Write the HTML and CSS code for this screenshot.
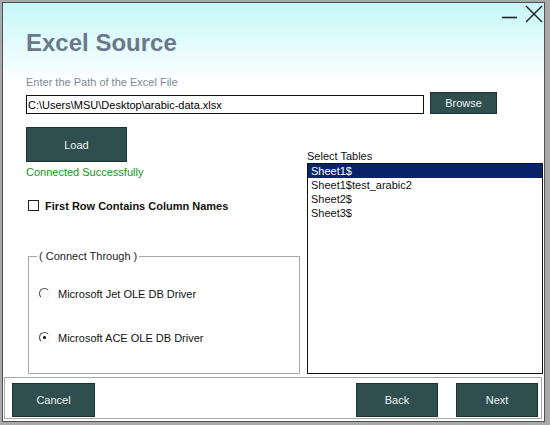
FILE: index.html
```html
<!DOCTYPE html>
<html>
<head>
  <title>Excel Source</title>
  <link rel="stylesheet" href="styles.css">
</head>
<body>

<div class="window">
  <div class="titlebar">
    <svg class="win-btn minimize" width="16" height="18" viewBox="0 0 16 18">
      <line x1="0" y1="12.5" x2="15" y2="12.5" stroke="#222" stroke-width="1.6"/>
    </svg>
    <svg class="win-btn close" width="18" height="18" viewBox="0 0 18 18">
      <line x1="1" y1="1" x2="17" y2="17" stroke="#222" stroke-width="1.4"/>
      <line x1="17" y1="1" x2="1" y2="17" stroke="#222" stroke-width="1.4"/>
    </svg>
  </div>

  <div class="content">
    <h1 class="title">Excel Source</h1>
    <div class="path-label">Enter the Path of the Excel File</div>
    <div class="path-row">
      <input class="path-input" type="text" value="C:\Users\MSU\Desktop\arabic-data.xlsx">
      <button class="btn browse">Browse</button>
    </div>

    <div class="main">
      <div class="left-col">
        <button class="btn load">Load</button>
        <div class="status">Connected Successfully</div>
        <div class="check-row">
          <span class="checkbox"></span>
          <span class="check-text">First Row Contains Column Names</span>
        </div>
        <fieldset class="group">
          <legend>( Connect Through )</legend>
          <div class="radio-row first">
            <span class="radio"></span>
            <span>Microsoft Jet OLE DB Driver</span>
          </div>
          <div class="radio-row second">
            <span class="radio checked"></span>
            <span>Microsoft ACE OLE DB Driver</span>
          </div>
        </fieldset>
      </div>

      <div class="right-col">
        <div class="list-label">Select Tables</div>
        <div class="listbox">
          <div class="list-item selected">Sheet1$</div>
          <div class="list-item">Sheet1$test_arabic2</div>
          <div class="list-item">Sheet2$</div>
          <div class="list-item">Sheet3$</div>
        </div>
      </div>
    </div>
  </div>

  <div class="footer">
    <button class="btn footer-btn">Cancel</button>
    <div class="spacer"></div>
    <button class="btn footer-btn">Back</button>
    <button class="btn footer-btn next">Next</button>
  </div>
</div>

</body>
</html>
```

FILE: styles.css
```css
html, body {
  margin: 0;
  padding: 0;
}
body {
  background-color: #a9a9a9;
  padding: 2px;
  width: 550px;
  height: 425px;
  box-sizing: border-box;
  font-family: "Liberation Sans", Arial, sans-serif;
  font-size: 11px;
  color: #111;
}
.window {
  width: 543px;
  height: 420px;
  box-sizing: border-box;
  border: 1px solid #505050;
  background: linear-gradient(to bottom, #c6f7f9 0, #ffffff 80px);
  display: flex;
  flex-direction: column;
}
.titlebar {
  height: 26px;
  box-sizing: border-box;
  padding: 2px 1px 0 0;
  display: flex;
  justify-content: flex-end;
  align-items: flex-start;
}
.win-btn {
  display: block;
}
.minimize {
  margin-right: 7px;
}

.content {
  flex: 1;
  display: flex;
  flex-direction: column;
  padding: 0 1px 0 23px;
  min-height: 0;
}
.title {
  margin: 0;
  font-size: 24px;
  line-height: 28px;
  font-weight: bold;
  color: #6a7889;
}
.path-label {
  margin-top: 19px;
  line-height: 13px;
  color: #7d8a95;
}
.path-row {
  margin-top: 3px;
  height: 22px;
  display: flex;
  align-items: flex-end;
  gap: 6px;
}
.path-input {
  width: 398px;
  height: 19px;
  box-sizing: border-box;
  margin: 0;
  border: 1px solid #111;
  padding: 0 1px;
  font-family: "Liberation Sans", Arial, sans-serif;
  font-size: 11px;
  color: #000;
  background: #fff;
  outline: none;
}

.btn {
  margin: 0;
  padding: 0;
  box-sizing: border-box;
  background-color: #2f4f4f;
  border: 1px solid #1d3333;
  color: #eef2f2;
  font-family: "Liberation Sans", Arial, sans-serif;
  font-size: 11px;
}
.browse {
  width: 67px;
  height: 22px;
}
.load {
  width: 101px;
  height: 35px;
}

.main {
  flex: 1;
  display: flex;
  min-height: 0;
}
.left-col {
  width: 281px;
  display: flex;
  flex-direction: column;
  align-items: flex-start;
  padding-top: 13px;
  padding-bottom: 3px;
  box-sizing: border-box;
}
.status {
  margin-top: 4px;
  line-height: 13px;
  color: #129412;
}
.check-row {
  margin-top: 20px;
  margin-left: 2px;
  height: 13px;
  display: flex;
  align-items: center;
}
.checkbox {
  width: 11px;
  height: 11px;
  box-sizing: border-box;
  border: 1px solid #222;
  background: #fff;
  margin-right: 6px;
}
.check-text {
  font-weight: bold;
}

.group {
  flex: 1;
  margin: 38px 0 0 2px;
  width: 272px;
  min-width: 0;
  box-sizing: border-box;
  border: 1px solid #a8a8a8;
  padding: 0 0 0 10px;
}
.group legend {
  margin-left: -2px;
  padding: 0 2px;
  line-height: 13px;
  color: #222;
}
.radio-row {
  display: flex;
  align-items: center;
  height: 13px;
  color: #111;
}
.radio-row.first {
  margin-top: 24px;
}
.radio-row.second {
  margin-top: 31px;
}
.radio {
  width: 11px;
  height: 11px;
  box-sizing: border-box;
  border-radius: 50%;
  border: 1.5px solid;
  border-color: #4a4a4a #f4f4f4 #f4f4f4 #4a4a4a;
  background: #fff;
  margin-right: 8px;
  position: relative;
}
.radio.checked::after {
  content: "";
  position: absolute;
  left: 2.5px;
  top: 2.5px;
  width: 3px;
  height: 3px;
  border-radius: 50%;
  background: #000;
}

.right-col {
  width: 236px;
  display: flex;
  flex-direction: column;
  padding-top: 36px;
  padding-bottom: 3px;
  box-sizing: border-box;
}
.list-label {
  line-height: 13px;
  color: #111;
}
.listbox {
  flex: 1;
  border: 1px solid #111;
  background: #fff;
}
.list-item {
  height: 14px;
  line-height: 14px;
  padding-left: 3px;
  color: #111;
}
.list-item.selected {
  background-color: #0a246a;
  color: #fff;
}

.footer {
  height: 42px;
  box-sizing: border-box;
  margin: 0 2px 2px 1px;
  border: 1px solid #a8a8a8;
  background: #fff;
  padding: 5px 3px 1px 7px;
  display: flex;
  gap: 18px;
}
.footer-btn {
  width: 82px;
  height: 34px;
}
.footer-btn:first-child {
  width: 83px;
}
.spacer {
  flex: 1;
}
```
